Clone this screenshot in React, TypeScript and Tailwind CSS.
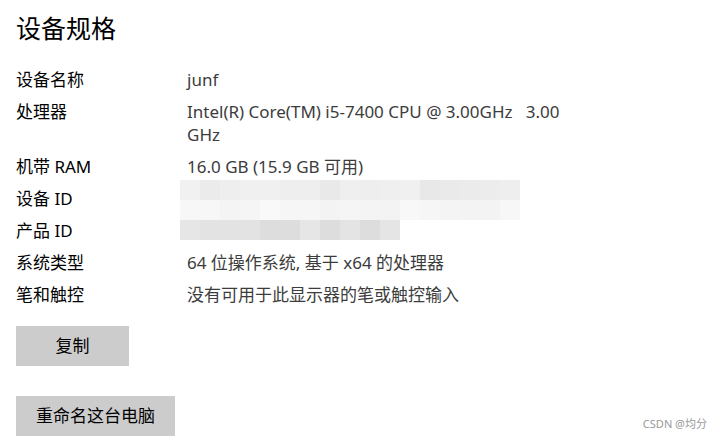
import React from "react";

const font = '"Noto Sans", "Noto Sans CJK SC", sans-serif';

const row1 = ["#f1f1f1","#ebebeb","#eeeeee","#f0f0f0","#f0f0f0","#eeeeee","#eeeeee","#e9e9e9","#efefef","#eeeeee","#efefef","#f0f0f0","#e8e8e8","#eaeaea","#ebebeb","#ececec","#eeeeee"];
const row2 = ["#f7f7f7","#f7f7f7","#f4f4f4","#f5f5f5","#f9f9f9","#f6f6f6","#f6f6f6","#f3f3f3","#f5f5f5","#f4f4f4","#f3f3f3","#f8f8f8","#f6f6f6","#f4f4f4","#f3f3f3","#f3f3f3","#f7f7f7"];
const row3 = ["#e6e6e6","#e3e3e3","#e3e3e3","#e3e3e3","#dddddd","#dddddd","#e6e6e6","#dddddd","#e4e4e4","#dddddd","#e5e5e5"];

function Mosaic() {
  return (
    <div className="flex flex-col">
      {[row1, row2, row3].map((r, i) => (
        <div key={i} className="flex">
          {r.map((c, j) => (
            <div key={j} className="w-[20px] h-[20px]" style={{ backgroundColor: c }} />
          ))}
        </div>
      ))}
    </div>
  );
}

const rows: [string, React.ReactNode][] = [
  ["设备名称", "junf"],
  ["处理器", <>Intel(R) Core(TM) i5-7400 CPU @ 3.00GHz&nbsp;&nbsp; 3.00<br />GHz</>],
  ["机带 RAM", "16.0 GB (15.9 GB 可用)"],
  ["设备 ID", ""],
  ["产品 ID", ""],
  ["系统类型", "64 位操作系统, 基于 x64 的处理器"],
  ["笔和触控", "没有可用于此显示器的笔或触控输入"],
];

export default function App() {
  return (
    <div className="relative w-[721px] h-[441px] bg-white overflow-hidden" style={{ fontFamily: font }}>
      <div className="pl-[16px] pt-[12px]">
        <h1 className="text-[25px] leading-[32px] text-black">设备规格</h1>
        <div className="relative mt-[24px] grid grid-cols-[171px_1fr] gap-y-[9px] text-[17px] leading-[23px]">
          {rows.map(([k, v]) => (
            <React.Fragment key={k}>
              <div className="text-black">{k}</div>
              <div className="text-[#3c3c3c] w-[390px]">{v || "\u00a0"}</div>
            </React.Fragment>
          ))}
          <div className="absolute left-[164px] top-[112px]">
            <Mosaic />
          </div>
        </div>
        <div className="mt-[20px] flex flex-col items-start gap-[30px]">
          <button className="w-[113px] h-[40px] bg-[#cccccc] text-black text-[17px]">复制</button>
          <button className="w-[159px] h-[40px] bg-[#cccccc] text-black text-[17px]">重命名这台电脑</button>
        </div>
      </div>
      <div className="absolute right-[14px] top-[416px] text-[11px] leading-[16px] text-[#999999]">CSDN @均分</div>
    </div>
  );
}
